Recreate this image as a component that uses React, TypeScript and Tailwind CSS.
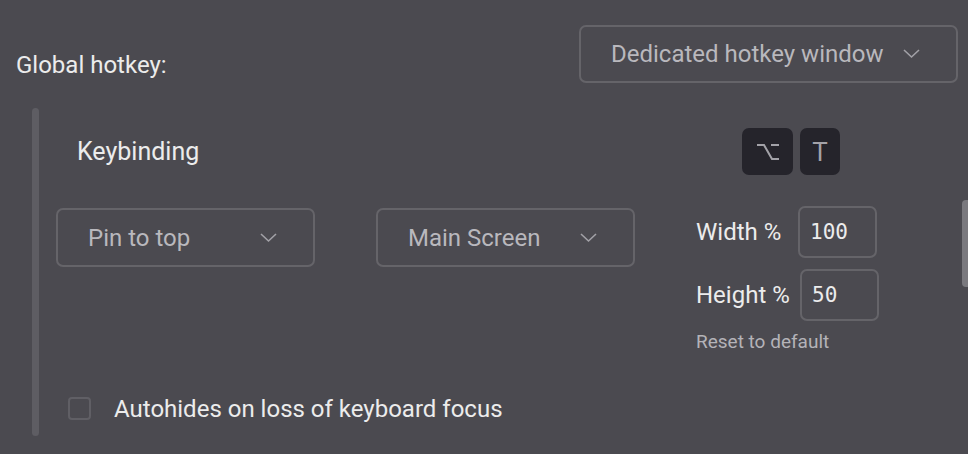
import { FC } from "react";

const Chevron: FC = () => (
  <svg width="17" height="10" viewBox="0 0 17 10" fill="none" className="shrink-0">
    <polyline points="1,1 8.5,8 16,1" stroke="#a2a1a7" strokeWidth="1.6" />
  </svg>
);

const Select: FC<{ label: string; className?: string }> = ({ label, className }) => (
  <div
    className={`flex items-center justify-between rounded-[7px] border-2 border-[#656469] pl-[30px] pr-[36px] text-[#b9b8bd] ${className ?? ""}`}
  >
    <span>{label}</span>
    <Chevron />
  </div>
);

const NumberInput: FC<{ value: string }> = ({ value }) => (
  <div className="flex h-[52px] w-[79px] items-center rounded-[7px] border-2 border-[#656469] pl-[10px] font-['DejaVu_Sans_Mono',monospace] text-[21px] text-[#ececec]">
    {value}
  </div>
);

const App: FC = () => {
  return (
    <div className="relative h-[454px] w-[968px] overflow-hidden bg-[#4b4a50] pt-[25px] font-['Roboto',sans-serif] text-[24px] leading-[36px] text-[#ececec]">
      <div className="flex items-start pl-4 pr-[10px]">
        <span className="mt-[22px]">Global hotkey:</span>
        <Select label="Dedicated hotkey window" className="ml-auto h-[58px] w-[379px]" />
      </div>

      <div className="ml-[32px] mt-[25px] flex">
        <div className="h-[328px] w-[7px] rounded-full bg-[#5e5d63]" />
        <div className="flex flex-col pl-[17px] pt-[20px]">
          <div className="flex">
            <div className="flex w-[579px] flex-col">
              <div className="flex h-[47px] items-center pl-[21px] text-[25px]">Keybinding</div>
              <div className="mt-[33px] flex gap-[61px]">
                <Select label="Pin to top" className="h-[59px] w-[259px]" />
                <Select label="Main Screen" className="h-[59px] w-[259px]" />
              </div>
            </div>
            <div className="ml-[61px] flex flex-col">
              <div className="flex h-[47px] gap-[7px] pl-[46px]">
                <div className="flex w-[51px] items-center justify-center rounded-[7px] bg-[#25242b]">
                  <svg width="24" height="18" viewBox="0 0 24 18" fill="none">
                    <polyline points="1,2 8,2 16,16 23,16" stroke="#a3a2a8" strokeWidth="2" />
                    <line x1="15" y1="2" x2="23" y2="2" stroke="#a3a2a8" strokeWidth="2" />
                  </svg>
                </div>
                <div className="flex w-[40px] items-center justify-center rounded-[7px] bg-[#25242b] text-[26px] text-[#a3a2a8]">
                  T
                </div>
              </div>
              <div className="mt-[31px] flex items-center">
                <span className="w-[102px]">Width %</span>
                <NumberInput value="100" />
              </div>
              <div className="mt-[11px] flex items-center">
                <span className="w-[104px]">Height %</span>
                <NumberInput value="50" />
              </div>
              <span className="mt-[10px] text-[19px] leading-[22px] text-[#b4b3b8]">Reset to default</span>
            </div>
          </div>
          <div className="mt-[44px] flex h-[23px] items-center gap-[23px] pl-[12px]">
            <div className="h-[23px] w-[23px] shrink-0 rounded-[4px] border-2 border-[#605f65]" />
            <span>Autohides on loss of keyboard focus</span>
          </div>
        </div>
      </div>

      <div className="absolute right-0 top-[200px] h-[87px] w-[6px] rounded-l-[4px] bg-[#7a797e]" />
    </div>
  );
};

export default App;
